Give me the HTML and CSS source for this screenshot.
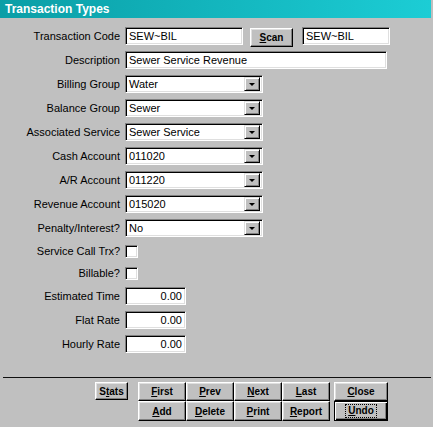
FILE: index.html
```html
<!DOCTYPE html>
<html>
<head>
<meta charset="utf-8">
<link rel="stylesheet" href="styles.css">
</head>
<body>
<div class="window">
  <div class="titlebar">Transaction Types</div>
  <div class="form">
    <div class="lbl">Transaction Code</div>
    <div class="ctl code-row">
      <div class="field w-code">SEW~BIL</div>
      <div class="btn scan"><u>S</u>can</div>
      <div class="field w-code2">SEW~BIL</div>
    </div>

    <div class="lbl">Description</div>
    <div class="ctl"><div class="field w-desc">Sewer Service Revenue</div></div>

    <div class="lbl">Billing Group</div>
    <div class="ctl"><div class="field combo"><span class="val">Water</span><span class="drop"><i></i></span></div></div>

    <div class="lbl">Balance Group</div>
    <div class="ctl"><div class="field combo"><span class="val">Sewer</span><span class="drop"><i></i></span></div></div>

    <div class="lbl">Associated Service</div>
    <div class="ctl"><div class="field combo"><span class="val">Sewer Service</span><span class="drop"><i></i></span></div></div>

    <div class="lbl">Cash Account</div>
    <div class="ctl"><div class="field combo"><span class="val">011020</span><span class="drop"><i></i></span></div></div>

    <div class="lbl">A/R Account</div>
    <div class="ctl"><div class="field combo"><span class="val">011220</span><span class="drop"><i></i></span></div></div>

    <div class="lbl">Revenue Account</div>
    <div class="ctl"><div class="field combo"><span class="val">015020</span><span class="drop"><i></i></span></div></div>

    <div class="lbl">Penalty/Interest?</div>
    <div class="ctl"><div class="field combo"><span class="val">No</span><span class="drop"><i></i></span></div></div>

    <div class="lbl short">Service Call Trx?</div>
    <div class="ctl short"><div class="check"></div></div>

    <div class="lbl short">Billable?</div>
    <div class="ctl short"><div class="check"></div></div>

    <div class="lbl">Estimated Time</div>
    <div class="ctl"><div class="field num">0.00</div></div>

    <div class="lbl">Flat Rate</div>
    <div class="ctl"><div class="field num">0.00</div></div>

    <div class="lbl">Hourly Rate</div>
    <div class="ctl"><div class="field num">0.00</div></div>
  </div>

  <div class="separator"></div>

  <div class="buttons">
    <div class="btn stats">S<u>t</u>ats</div>
    <div class="nav">
      <div class="btn"><u>F</u>irst</div>
      <div class="btn"><u>P</u>rev</div>
      <div class="btn"><u>N</u>ext</div>
      <div class="btn"><u>L</u>ast</div>
      <div class="btn"><u>A</u>dd</div>
      <div class="btn"><u>D</u>elete</div>
      <div class="btn"><u>P</u>rint</div>
      <div class="btn"><u>R</u>eport</div>
    </div>
    <div class="side">
      <div class="btn"><u>C</u>lose</div>
      <div class="btn default"><span class="focus"><u>U</u>ndo</span></div>
    </div>
  </div>
</div>
</body>
</html>
```

FILE: styles.css
```css
html, body {
  margin: 0;
  padding: 0;
  background: #c0c0c0;
}
body {
  font-family: "Liberation Sans", Arial, sans-serif;
  font-size: 11px;
  color: #000;
}
.window {
  width: 433px;
  height: 427px;
  background: #c0c0c0;
  box-sizing: border-box;
}
.titlebar {
  height: 18px;
  width: 431px;
  box-sizing: border-box;
  padding-left: 5px;
  background: linear-gradient(to right, #0a9ea6, #1ccdd5);
  color: #fff;
  font-weight: bold;
  font-size: 12px;
  line-height: 18px;
}
.form {
  display: grid;
  grid-template-columns: 120px 1fr;
  column-gap: 5px;
  row-gap: 6px;
  padding-top: 9px;
  align-items: center;
}
.lbl {
  text-align: right;
  height: 18px;
  line-height: 18px;
  white-space: nowrap;
}
.lbl.short, .ctl.short {
  height: 16px;
  line-height: 16px;
}
.ctl {
  height: 18px;
  display: flex;
  align-items: center;
}
.code-row {
  align-items: flex-start;
}
.field {
  box-sizing: border-box;
  height: 18px;
  background: #fff;
  border-style: solid;
  border-width: 1px;
  border-color: #808080 #fff #fff #808080;
  box-shadow: inset 1px 1px 0 #000, inset -1px -1px 0 #dfdfdf;
  padding: 0 3px 0 3px;
  line-height: 16px;
  white-space: nowrap;
  overflow: hidden;
}
.w-code { width: 118px; }
.w-code2 { width: 88px; margin-left: 9px; }
.w-desc { width: 262px; }
.combo {
  width: 138px;
  display: flex;
  justify-content: space-between;
  padding-right: 2px;
}
.drop {
  box-sizing: border-box;
  width: 16px;
  height: 14px;
  margin-top: 1px;
  background: #c0c0c0;
  border-style: solid;
  border-width: 1px;
  border-color: #dfdfdf #000 #000 #dfdfdf;
  box-shadow: inset 1px 1px 0 #fff, inset -1px -1px 0 #808080;
  display: flex;
  align-items: center;
  justify-content: center;
}
.drop i {
  display: block;
  width: 0;
  height: 0;
  border-left: 3px solid transparent;
  border-right: 3px solid transparent;
  border-top: 3px solid #000;
  margin-top: 1px;
}
.num {
  width: 61px;
  text-align: right;
}
.check {
  box-sizing: border-box;
  width: 13px;
  height: 13px;
  background: #fff;
  border-style: solid;
  border-width: 1px;
  border-color: #808080 #fff #fff #808080;
  box-shadow: inset 1px 1px 0 #000, inset -1px -1px 0 #dfdfdf;
}
.btn {
  box-sizing: border-box;
  background: #c0c0c0;
  border-style: solid;
  border-width: 1px;
  border-color: #fff #000 #000 #fff;
  box-shadow: inset -1px -1px 0 #808080, inset 1px 1px 0 #dfdfdf;
  font-weight: bold;
  font-size: 10px;
  text-align: center;
  display: flex;
  align-items: center;
  justify-content: center;
  white-space: nowrap;
}
.scan {
  width: 43px;
  height: 19px;
  margin-top: 1px;
  margin-left: 7px;
}
.separator {
  height: 1px;
  background: #111;
  margin: 24px 2px 0 3px;
}
.buttons {
  display: flex;
  align-items: flex-start;
  padding-left: 95px;
  margin-top: 4px;
}
.stats {
  width: 33px;
  height: 18px;
}
.nav {
  margin-left: 10px;
  display: grid;
  grid-template-columns: repeat(4, 48px);
  grid-template-rows: 19px 20px;
}
.side {
  margin-left: 4px;
  display: grid;
  grid-template-rows: 19px 20px;
  width: 54px;
}
.default {
  border: 1px solid #000;
  box-shadow: inset 1px 1px 0 #fff, inset -1px -1px 0 #000, inset -2px -2px 0 #808080;
}
.focus {
  outline: 1px dotted #000;
  outline-offset: 0;
  padding: 0 2px;
  line-height: 12px;
}
```
